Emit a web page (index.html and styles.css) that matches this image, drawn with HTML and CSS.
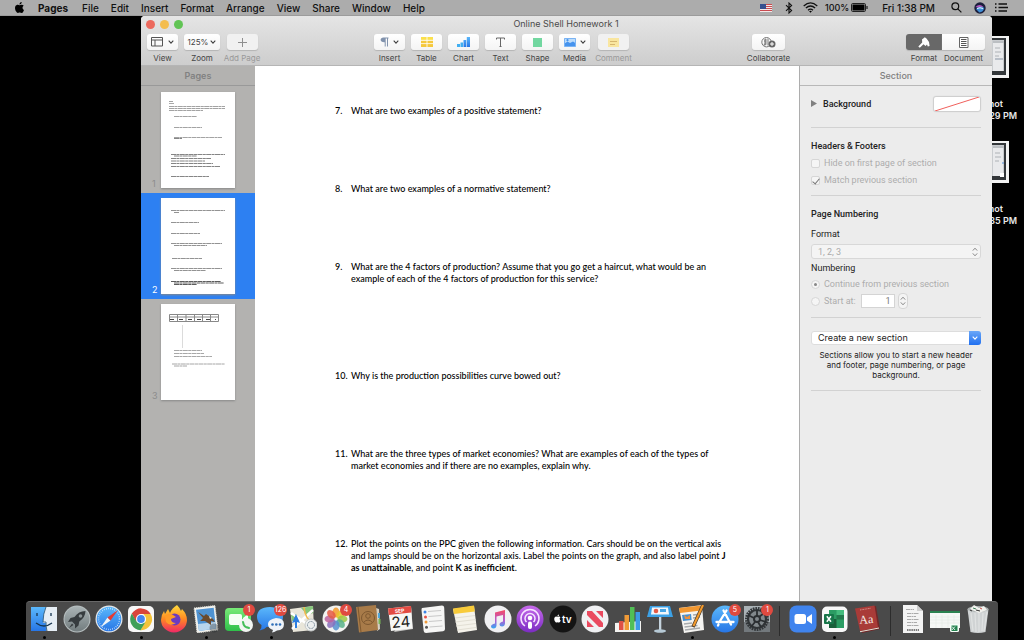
FILE: index.html
```html
<!DOCTYPE html>
<html lang="en">
<head>
<meta charset="utf-8">
<title>Online Shell Homework 1</title>
<link rel="stylesheet" href="styles.css">
</head>
<body>
<svg class="defs" aria-hidden="true">
  <defs>
    <symbol id="apple" viewBox="0 0 24 24"><path d="M12.152 6.896c-.948 0-2.415-1.078-3.96-1.04-2.04.027-3.91 1.183-4.961 3.014-2.117 3.675-.546 9.103 1.519 12.09 1.013 1.454 2.208 3.09 3.792 3.039 1.52-.065 2.09-.987 3.935-.987 1.831 0 2.35.987 3.96.948 1.637-.026 2.676-1.48 3.676-2.948 1.156-1.688 1.636-3.325 1.662-3.415-.039-.013-3.182-1.221-3.22-4.857-.026-3.04 2.48-4.494 2.597-4.559-1.429-2.09-3.623-2.324-4.39-2.376-2-.156-3.675 1.09-4.61 1.09zM15.53 3.83c.843-1.012 1.4-2.427 1.245-3.83-1.207.052-2.662.805-3.532 1.818-.78.896-1.454 2.338-1.273 3.714 1.338.104 2.715-.688 3.559-1.701"/></symbol>
    <symbol id="chev" viewBox="0 0 6 4"><path d="M.7.7 3 3.1 5.3.7" fill="none" stroke="currentColor" stroke-width="1.1"/></symbol>
    <symbol id="updown" viewBox="0 0 6 10"><path d="M.8 3.6 3 1.2 5.2 3.6M.8 6.4 3 8.8 5.2 6.4" fill="none" stroke="currentColor"/></symbol>
    <linearGradient id="gBlue" x2="0" y2="1"><stop stop-color="#5bb8fb"/><stop offset="1" stop-color="#2776e6"/></linearGradient>
    <linearGradient id="gGreen" x2="0" y2="1"><stop stop-color="#79ea78"/><stop offset="1" stop-color="#2fc04a"/></linearGradient>
    <linearGradient id="gPurple" x2="0" y2="1"><stop stop-color="#c86bec"/><stop offset="1" stop-color="#7b2cc2"/></linearGradient>
    <linearGradient id="gGrey" x2="0" y2="1"><stop stop-color="#aab4b6"/><stop offset="1" stop-color="#727c7e"/></linearGradient>
    <linearGradient id="gFire" x2="0" y2="1"><stop stop-color="#ffdc3d"/><stop offset=".5" stop-color="#ff8a22"/><stop offset="1" stop-color="#ee2866"/></linearGradient>
    <linearGradient id="gNote" x2="0" y2="1"><stop stop-color="#f64b63"/><stop offset=".55" stop-color="#b65ad0"/><stop offset="1" stop-color="#32a8f3"/></linearGradient>
  </defs>
</svg>

<header class="menubar">
  <nav class="menus" aria-label="Menu bar">
    <button class="menu" aria-label="Apple"><svg class="apple"><use href="#apple"/></svg></button>
    <button class="menu menu-app">Pages</button>
    <button class="menu">File</button>
    <button class="menu">Edit</button>
    <button class="menu">Insert</button>
    <button class="menu">Format</button>
    <button class="menu">Arrange</button>
    <button class="menu">View</button>
    <button class="menu">Share</button>
    <button class="menu">Window</button>
    <button class="menu">Help</button>
  </nav>
  <div class="status">
    <svg width="12" height="8" viewBox="0 0 12 8"><path fill="#f3e8e8" d="M0 0h12v8H0z"/><path stroke="#c94a50" d="M0 .5h12M0 2.5h12M0 4.5h12M0 6.5h12"/><path fill="#35508f" d="M0 0h6v5H0z"/></svg>
    <svg class="s-bt" width="8" height="12" viewBox="0 0 8 12"><path d="M1 3.2 6.6 8.6 4 11V1l2.6 2.4L1 8.8" fill="none" stroke="#111" stroke-width="1.1"/></svg>
    <svg class="s-wifi" width="15" height="11" viewBox="0 0 15 11"><g fill="none" stroke="#111" stroke-width="1.3"><path d="M.7 3.9Q7.5-2.2 14.3 3.9"/><path d="M2.9 6.1Q7.5 2 12.1 6.1"/><path d="M5 8.2q2.5-2.1 5 0"/></g><path d="m7.5 10.8-1.4-1.6q1.4-1 2.8 0z"/></svg>
    <span class="s-pct">100%</span>
    <svg class="s-bat" width="17" height="9" viewBox="0 0 17 9"><rect x=".5" y=".5" width="14" height="8" rx="1.2" fill="none" stroke="#222"/><path d="M1.5 1.5h12v6h-12zM15.5 3h1v3h-1z"/></svg>
    <span class="s-clock">Fri 1:38 PM</span>
    <svg class="s-find" width="11" height="11" viewBox="0 0 11 11" fill="none" stroke="#111" stroke-width="1.2"><circle cx="4.3" cy="4.3" r="3.4"/><path d="m6.8 6.8 3.6 3.6"/></svg>
    <svg class="s-siri" width="12" height="12" viewBox="0 0 12 12"><circle cx="6" cy="6" r="5.7" fill="#1c1f3c"/><path d="M1.5 5q4-4 8 0-4 1-8 0" fill="#b25bc2"/><path d="M2 7q4-4 8.300-1-1 4-5 4.500" fill="#3f8ed6"/><path d="M3 6.500q3-1.500 6 0" stroke="#e8f6ff" fill="none"/></svg>
    <svg class="s-list" width="13" height="9" viewBox="0 0 13 9"><path d="M3.500 1H12M3.500 4.500H13M3.500 8H12M0 1h1.500M0 4.500h1.500M0 8h1.500" stroke="#111" stroke-width="1.600"/></svg>
  </div>
</header>

<main class="desktop">
  <div class="file file-a">
    <svg width="40" height="42" viewBox="0 0 40 42"><path fill="#f2f2f2" d="M0 0h40v42H0z"/><path fill="#33373a" d="M2 2h35v37H2z"/><path fill="#c9cccf" d="M4 4h31v31H4z"/><path fill="#e9eaec" d="M24 7h10v28H24z"/><path stroke="#aeb2b6" d="M24 6h11M26 12h5M26 16h6M26 20h4"/><path stroke="#8793a3" d="M26 23h8"/></svg>
    <span>Screen Shot</span><span>2020-01…29 PM</span>
  </div>
  <div class="file file-b">
    <svg width="40" height="42" viewBox="0 0 40 42"><path fill="#f2f2f2" d="M0 0h40v42H0z"/><path fill="#33373a" d="M2 2h35v37H2z"/><path fill="#c9cccf" d="M4 4h31v31H4z"/><path fill="#e9eaec" d="M24 7h10v28H24z"/><path stroke="#aeb2b6" d="M24 6h11M26 12h5M26 16h6M26 20h4"/><path stroke="#5790d8" d="M33 22h2"/><path fill="#fff" d="M31 32h4v4h-4z"/></svg>
    <span>Screen Shot</span><span>2020-01…35 PM</span>
  </div>

  <section class="window">
    <div class="chrome">
      <div class="titlebar">
        <div class="lights">
          <button class="light red" aria-label="Close"></button>
          <button class="light amber" aria-label="Minimise"></button>
          <button class="light green" aria-label="Zoom window"></button>
        </div>
        <h1 class="title">Online Shell Homework 1</h1>
      </div>
      <div class="toolbar">
        <div class="group">
          <button class="tool"><span class="key"><svg width="13" height="10" viewBox="0 0 13 10"><path fill="none" stroke="#555" d="M.5.500h11v8.500H.5zM.500 3h11M4 3v6"/></svg><svg class="chev"><use href="#chev"/></svg></span>View</button>
          <button class="tool tool-zoom"><span class="key">125%<svg class="chev"><use href="#chev"/></svg></span>Zoom</button>
          <button class="tool tool-add" disabled><span class="key"><svg width="9" height="9" viewBox="0 0 9 9"><path stroke="#8f8f8f" d="M4.500 0v9M0 4.500h9"/></svg></span>Add Page</button>
        </div>
        <div class="group">
          <button class="tool"><span class="key"><svg width="9" height="10" viewBox="0 0 9 10"><path fill="#8293ad" d="M3.500.500H8.500v1H8v8H7v-8H5.700v8h-1V5.200C-.5 5.500-.5.500 3.500.500z"/></svg><svg class="chev"><use href="#chev"/></svg></span>Insert</button>
          <button class="tool"><span class="key"><svg width="12" height="10" viewBox="0 0 12 10"><path fill="#fbe04c" d="M0 0h12v3.500H0z"/><path fill="#f5c83c" d="M0 3.500h12V10H0z"/><path stroke="#fff" stroke-width=".8" d="M6 0v10M0 3.300h12M0 6.600h12"/></svg></span>Table</button>
          <button class="tool"><span class="key"><svg width="13" height="10" viewBox="0 0 13 10"><path fill="#41aff2" d="M0 7h3v3H0zM3.500 5.500h2.500V10H3.500z"/><path fill="url(#gBlue)" d="M6.500 3h2.700v7H6.500zM9.800 0H13v10H9.800z"/></svg></span>Chart</button>
          <button class="tool"><span class="key"><svg width="9" height="10" viewBox="0 0 9 10"><path fill="none" stroke="#666" d="M.5 2.500V1h8v1.500M4.500 1v8.500M3.500 9.500h2"/></svg></span>Text</button>
          <button class="tool"><span class="key"><svg width="9" height="9"><path fill="#72d7a0" d="M0 0h9v9H0z"/></svg></span>Shape</button>
          <button class="tool"><span class="key"><svg width="12" height="9" viewBox="0 0 12 9"><path fill="#bcdcfb" d="M0 0h12v9H0z"/><path fill="#4593ee" d="M0 8V6l3.500-2.500L6 5l3-1.500 3 2V8z"/><circle cx="3.500" cy="2.200" r="1.100" fill="#4593ee"/><path fill="none" stroke="#7ab3f3" d="M.5.500h11v8H.5z"/></svg><svg class="chev"><use href="#chev"/></svg></span>Media</button>
          <button class="tool tool-wide" disabled><span class="key"><svg width="11" height="9" viewBox="0 0 11 9"><path fill="#f9e6a0" d="M0 0h11v9H0z"/><path stroke="#d6b670" d="M2 3.500h7M2 6.500h5"/></svg></span>Comment</button>
        </div>
        <div class="group">
          <button class="tool tool-collab"><span class="key"><svg width="15" height="11" viewBox="0 0 15 11"><circle cx="5.500" cy="5.200" r="4.700" fill="none" stroke="#777"/><path fill="#888" d="M3.500 2q2-1 2 .5v5q-2 2-3 .5l1-2q-1-2 0-4z"/><path stroke="#777" fill="none" d="M7 1.500v7"/><circle cx="11" cy="7" r="3.500" fill="#666"/><path stroke="#fff" d="M11 5v4M9 7h4"/></svg></span>Collaborate</button>
        </div>
        <div class="group group-seg">
          <button class="tool tool-format" aria-pressed="true"><span class="key key-on"><svg width="12" height="11" viewBox="0 0 12 11"><path fill="#fff" d="M4 2.500 6.800.300l1.700 1.200L11 5l.6 4-1.800.5-.8-2L7.500 9 5.500 7.200 1.800 10.800.3 9.500 4.200 5.500z"/></svg></span>Format</button>
          <button class="tool tool-doc"><span class="key key-end"><svg width="10" height="11" viewBox="0 0 10 11"><path fill="#fff" stroke="#666" d="M.5.500h8.500v10H.5z"/><path stroke="#555" d="M2 2.500h5.500M2 4.500h5.500M2 6.500h5.500M2 8.500h5.500"/></svg></span>Document</button>
        </div>
      </div>
    </div>

    <div class="panes">
      <aside class="pages">
        <h2 class="pane-title">Pages</h2>
        <button class="page"><span class="num">1</span>
          <svg class="thumb" viewBox="0 0 74 96"><g stroke="#666" stroke-width=".8" stroke-dasharray="5 .4 3 .4"><path d="M8 9.500h4M8 14.500h56M8 16.500h56M8 18.500h34M13 24.500h23M13 35.500h28M13 45.500h48" opacity=".75"/><path d="M13 46.500h8M10 62.500h54M13 64h23M10 66.500h40M10 69h34M10 71.500h42M10 74.500h49M10 84.500h38"/></g><path stroke="#aaa" d="M8 11.500h5"/></svg></button>
        <button class="page page-on" aria-current="page"><span class="num">2</span>
          <svg class="thumb" viewBox="0 0 74 96"><g stroke="#777" stroke-width=".8" stroke-dasharray="5 .4 3 .4"><path d="M10 12.500h54M13 14.500h5M10 24.500h28M10 35.500h29M10 45.500h51M13 47.500h33M11 60.500h30M10 70.500h51M13 72.500h32"/><path d="M10 83.500h50M13 85h50M13 86.500h23" stroke="#333"/></g></svg></button>
        <button class="page"><span class="num">3</span>
          <svg class="thumb" viewBox="0 0 74 96"><path fill="none" stroke="#888" d="M8.500 10.500h49v7h-49zM8.500 13h49M16.500 10.500v7M25 10.500v7M33.500 10.500v7M41.500 10.500v7M49.500 10.500v7"/><path stroke="#444" stroke-dasharray="4 5" d="M9 15.500h46"/><path fill="none" stroke="#ccc" stroke-width=".7" d="M21.500 21v23"/><g stroke="#777" stroke-width=".8" stroke-dasharray="5 .4 3 .4"><path d="M13 46.500h28M13 49.500h30M13 52.500h38M11 60h53M13 62h13" opacity=".8"/></g></svg></button>
      </aside>

      <article class="sheet">
        <ol class="questions">
          <li><span class="n">7.</span><p>What are two examples of a positive statement?</p></li>
          <li><span class="n">8.</span><p>What are two examples of a normative statement?</p></li>
          <li class="roomy"><span class="n">9.</span><p>What are the 4 factors of production? Assume that you go get a haircut, what would be an<br>example of each of the 4 factors of production for this service?</p></li>
          <li><span class="n">10.</span><p>Why is the production possibilities curve bowed out?</p></li>
          <li><span class="n">11.</span><p>What are the three types of market economies? What are examples of each of the types of<br>market economies and if there are no examples, explain why.</p></li>
          <li><span class="n">12.</span><p>Plot the points on the PPC given the following information. Cars should be on the vertical axis<br>and lamps should be on the horizontal axis. Label the points on the graph, and also label point <b>J<br>as unattainable</b>, and point <b>K as inefficient</b>.</p></li>
        </ol>
      </article>

      <aside class="inspector">
        <h2 class="pane-title">Section</h2>
        <form class="settings">
          <section class="block block-bg">
            <button type="button" class="disclose"><svg width="6" height="7" viewBox="0 0 6 7"><path fill="#808080" d="M0 0l6 3.500L0 7z"/></svg>Background</button>
            <button type="button" class="swatch" aria-label="Background colour"><svg width="46" height="14" viewBox="0 0 46 14"><path d="M1 14 45 0" stroke="#f0605c"/></svg></button>
          </section>
          <section class="block block-head">
            <h3>Headers &amp; Footers</h3>
            <label class="opt"><input type="checkbox" class="tick" disabled>Hide on first page of section</label>
            <label class="opt"><input type="checkbox" class="tick" checked disabled>Match previous section</label>
          </section>
          <section class="block block-num">
            <h3>Page Numbering</h3>
            <label class="field-name" for="fmt">Format</label>
            <div class="pick"><select id="fmt" disabled><option>1, 2, 3</option></select><svg class="pick-mark"><use href="#updown"/></svg></div>
            <p class="field-name name-numbering">Numbering</p>
            <label class="opt"><input type="radio" name="numbering" class="dot" checked disabled>Continue from previous section</label>
            <div class="start"><label class="opt"><input type="radio" name="numbering" class="dot" disabled>Start at:</label><input class="start-num" type="text" value="1" aria-label="Start number" disabled><button type="button" class="stepper" aria-label="Change start number" disabled><svg width="6" height="10"><use href="#updown"/></svg></button></div>
          </section>
          <section class="block block-new">
            <div class="pick pick-new"><select aria-label="Create a new section"><option>Create a new section</option></select><span class="pick-cap"><svg class="chev"><use href="#chev"/></svg></span></div>
            <p class="hint">Sections allow you to start a new header<br>and footer, page numbering, or page<br>background.</p>
          </section>
        </form>
      </aside>
    </div>
  </section>
</main>

<nav class="dock" aria-label="Dock">
  <button class="app running" aria-label="Finder"><svg viewBox="0 0 28 28"><path fill="url(#gBlue)" d="M1 2h15v24H1z"/><path fill="#e6eef5" d="M15 2h12v24H16.500q-.7-4-.7-8H13q0-9 3-16z"/><path d="M7 8v3M21 8v3M6 18q8 6 16 0" stroke="#16344f" stroke-width="1.300" fill="none"/><path d="M16 2q-3 7-3 15h3q0 5 1 9" fill="none" stroke="#24506f" stroke-width=".8"/></svg></button>
  <button class="app" aria-label="Launchpad"><svg viewBox="0 0 28 28"><circle cx="14" cy="14" r="13.500" fill="#b6bebf"/><circle cx="14" cy="14" r="12.500" fill="url(#gGrey)"/><path fill="#363c3f" d="M22.500 6q-7 0-11 6l-4 1-2.500 4 4-.5 3 3 0 4 3.500-3 .8-4q6-4 6.200-10.500zM9 18.500l1.500 1.500L6 23z"/><circle cx="17.500" cy="11" r="1.800" fill="#8b9496"/></svg></button>
  <button class="app" aria-label="Safari"><svg viewBox="0 0 28 28"><circle cx="14" cy="14" r="13.500" fill="#e5e7e9"/><circle cx="14" cy="14" r="12.300" fill="url(#gBlue)"/><circle cx="14" cy="14" r="10.500" fill="none" stroke="#e8f4ff" stroke-width="1.500" stroke-dasharray=".6 1.500"/><path fill="#f0f4f7" d="m5.500 22.500 7-10 3 3z"/><path fill="#e73a32" d="m23 5-10.500 7.500 3 3z"/></svg></button>
  <button class="app running" aria-label="Chrome"><svg viewBox="0 0 28 28"><rect x="1" y="1" width="26" height="26" rx="5" fill="#f7f7f7"/><path fill="#d9453a" d="M4.800 8.500A11 11 0 0 1 23.700 9H14l-5 8z"/><path fill="#f3c33b" d="M23.700 9A11 11 0 0 1 13.500 25.200L18.500 16l-2-7z"/><path fill="#3f9f58" d="M4.800 8.500A11 11 0 0 0 13.500 25.200l4.800-8-5 1-4-2z"/><circle cx="14" cy="14" r="5" fill="#fff"/><circle cx="14" cy="14" r="3.900" fill="#4687ee"/></svg></button>
  <button class="app" aria-label="Firefox"><svg viewBox="0 0 28 28"><path fill="url(#gFire)" d="M17 0q3 3 4 6l1-2q5 5 5 11a13 12.500 0 0 1-26 0q0-5 3-9l1 3 3-5 2 4q2-5 7-8z"/><circle cx="14.500" cy="14.500" r="6" fill="#6b3bc0"/><path fill="#ff9b28" d="M5 11q4-4 8-1l3 2-5 2q0 4 5 4-6 4-10-1z"/></svg></button>
  <button class="app running" aria-label="Mail"><svg viewBox="0 0 28 28"><path fill="#f3f3ee" stroke="#d6d6d0" stroke-dasharray="1 1" d="m2 3 21-2.500L26 25 5 28z"/><path fill="#4f93d2" d="m4 4.700 17.700-2L24 23.500 7 26z"/><path fill="#b8d5ec" d="m6 19 17-2 1 6.500L7 26z"/><path fill="#6a4a2d" d="m6 7 6 4 2-2 7 5 2 3-4-1 0 4-6-4-5 0 3-3z"/><path fill="#f1ede4" d="m17 11 3 2-2 1z"/><circle cx="22" cy="23" r="4.500" fill="#23282c" fill-opacity=".35"/></svg></button>
  <button class="app" aria-label="FaceTime"><svg viewBox="0 0 28 28"><rect x="0" y="3" width="26" height="23" rx="4" fill="url(#gGreen)"/><rect x="4" y="9" width="13" height="11" rx="2" fill="#f5fff5"/><path fill="#f5fff5" d="m18 13 5-4v11l-5-4z"/><circle cx="21" cy="20" r="7" fill="#f2f5f2"/><path fill="none" stroke="#43bd58" stroke-width="2" stroke-linecap="round" d="M18 17q.5 5.500 6 6M18 17l.5 1.500M24 23l-1.500-.5"/></svg><span class="badge">1</span></button>
  <button class="app running" aria-label="Messages"><svg viewBox="0 0 28 28"><path fill="url(#gBlue)" d="M13 2c7 0 13 4 13 10s-6 10-13 10q-2 0-3-.3Q7 25 2.500 25.500 5 23 4.500 20 0 17 0 12 0 2 13 2z"/><path fill="#eef3f8" d="M19 13q8 0 8 6t-7 6.500q-3 2-5 2l1-2.500q-5-1.500-5-6t8-6z"/><g fill="#2f6fb8"><circle cx="15.500" cy="19.500" r="1.300"/><circle cx="19.300" cy="19.500" r="1.300"/><circle cx="23" cy="19.500" r="1.300"/></g></svg><span class="badge">126</span></button>
  <button class="app" aria-label="Maps"><svg viewBox="0 0 28 28"><path fill="#e9e6da" d="m1 4 23-3 1 24-21 2z"/><path fill="#87c77c" d="m12 3 12-2 .3 7-6 2zM2 10l5-1 1 6-5 1z"/><path stroke="#fff" stroke-width="2.500" d="m3 24 21-19M2 8l22 15" fill="none"/><path stroke="#f0b84d" stroke-width="1.500" d="M15 2q1 12 9 16" fill="none"/><path fill="#2d7ee0" d="m7 9 4 9-3-1v6H6v-6l-3 1z"/><circle cx="22" cy="20" r="6" fill="#ecefef" stroke="#c5c8c8"/><circle cx="22" cy="20" r="3.500" fill="none" stroke="#6f8291" stroke-dasharray="1 .6"/></svg></button>
  <button class="app" aria-label="Photos"><svg viewBox="0 0 28 28"><circle cx="14" cy="14" r="13.500" fill="#f3f3f1"/><g fill-opacity=".85"><ellipse cx="14" cy="7.500" rx="3.500" ry="5" fill="#f49b2c"/><ellipse cx="14" cy="7.500" rx="3.500" ry="5" fill="#e6c52a" transform="rotate(45 14 14)"/><ellipse cx="14" cy="7.500" rx="3.500" ry="5" fill="#9cc544" transform="rotate(90 14 14)"/><ellipse cx="14" cy="7.500" rx="3.500" ry="5" fill="#58b28b" transform="rotate(135 14 14)"/><ellipse cx="14" cy="7.500" rx="3.500" ry="5" fill="#5590d0" transform="rotate(180 14 14)"/><ellipse cx="14" cy="7.500" rx="3.500" ry="5" fill="#8770bd" transform="rotate(225 14 14)"/><ellipse cx="14" cy="7.500" rx="3.500" ry="5" fill="#bd619e" transform="rotate(270 14 14)"/><ellipse cx="14" cy="7.500" rx="3.500" ry="5" fill="#e55a45" transform="rotate(315 14 14)"/></g></svg><span class="badge">4</span></button>
  <button class="app" aria-label="Contacts"><svg viewBox="0 0 28 28"><path fill="#d6d1c5" d="m22 3 3 1 1 20-3 2z"/><path fill="#4ea5d8" d="M24 8h2v5h-2z"/><path fill="#79b656" d="M24.500 14h2v5h-2z"/><path fill="#a87b49" d="M2 2 22 0l2 25L5 27.500z"/><path stroke="#7f592f" d="m4 2 3 25" fill="none"/><g fill="none" stroke="#7d5830"><circle cx="14" cy="13" r="6.500"/><circle cx="14" cy="11" r="2.300"/><path d="M9.500 17.500q4.500-5 9 0"/></g></svg></button>
  <button class="app" aria-label="Calendar"><svg viewBox="0 0 28 28"><path fill="#c8c8c6" d="m24 2 2 22-19 3z"/><path fill="#f7f7f5" d="M1 3.500 24 1l1.500 22.500L4 26z"/><path fill="#e34b43" d="m1 3.500 23-2.500.4 6.500L1.800 10z"/><text x="8" y="8" class="cal-month" transform="rotate(-5 8 8)">SEP</text><text x="5" y="23" class="cal-day" transform="rotate(-5 5 23)">24</text></svg></button>
  <button class="app" aria-label="Reminders"><svg viewBox="0 0 28 28"><path fill="#f6f6f5" d="m3 3 20-2.500q2 0 2.200 2L26 24q0 2-2 2.200L7 28q-2 0-2.300-2L2.500 5q0-1.500.5-2z"/><path stroke="#c8c8c8" d="m9 6.500 13-1M9.500 11.500l13-1M10 16.500l13-1M10.500 22l13-1"/><circle cx="6" cy="7" r="1.500" fill="#3c84e5"/><circle cx="6.500" cy="12" r="1.500" fill="#e65046"/><circle cx="7" cy="17" r="1.500" fill="#f09a38"/><circle cx="7.500" cy="22.300" r="1.500" fill="#555"/></svg></button>
  <button class="app" aria-label="Notes"><svg viewBox="0 0 28 28"><path fill="#f5f3eb" d="m2 4 21-3 3 24-19 3z"/><path fill="#f8cb3a" d="m2 3.500 21-3 .8 6L2.800 9z"/><path stroke="#e2dfd4" d="m4 13 20-2.500M4.500 17l20-2.500M5 21l20-2.500M6 25l19-2.500"/></svg></button>
  <button class="app" aria-label="Music"><svg viewBox="0 0 28 28"><circle cx="14" cy="14" r="13.500" fill="#f0f0f2"/><path fill="url(#gNote)" d="m11 7.500 10-2.500v13.500q-.3 3-3 3-2.500 0-2.500-2t3.500-3V10l-6.500 1.500v9q-.3 2.800-3 3-2.500 0-2.500-2t4-3z"/></svg></button>
  <button class="app" aria-label="Podcasts"><svg viewBox="0 0 28 28"><circle cx="14" cy="14" r="13.500" fill="url(#gPurple)"/><g fill="none" stroke="#f5e5ff" stroke-width="1.500"><path d="M9 21a9 9 0 1 1 10 0"/><path d="M10.500 17a5 5 0 1 1 7 0"/></g><circle cx="14" cy="13" r="2.300" fill="#fff"/><rect x="12" y="16.500" width="4" height="7.500" rx="2" fill="#fff"/></svg></button>
  <button class="app" aria-label="Apple TV"><svg viewBox="0 0 28 28"><circle cx="14" cy="14" r="13.500" fill="#141414"/><svg x="4.500" y="9" width="8" height="9" fill="#fff"><use href="#apple"/></svg><text x="13" y="17.500" class="tv">tv</text></svg></button>
  <button class="app" aria-label="News"><svg viewBox="0 0 28 28"><circle cx="14" cy="14" r="13.500" fill="#f0f1f3"/><path fill="#ea4a5f" d="M6 6h5l11 12v4h-4L6 10zM15 6h7v7zM6 15v7h7z"/></svg></button>
  <button class="app" aria-label="Numbers"><svg viewBox="0 0 28 28"><path fill="#f3f3f1" d="m1 18 26-2v11H1z"/><path fill="#df5046" d="M5 16h4.500v9H5z"/><path fill="#f09a37" d="M10.500 10H15v15h-4.500z"/><path fill="#51bf55" d="M16 2h4.500v23H16z"/><path fill="#3d9be5" d="M21.500 7H26v18h-4.500z"/></svg></button>
  <button class="app" aria-label="Keynote"><svg viewBox="0 0 28 28"><path fill="#3ca1e6" d="M4 1h20l3 11H1z"/><path fill="#f3f7fa" d="M6 2.500h16l1 7H5z"/><circle cx="10" cy="6" r="2.300" fill="#e55b46"/><path fill="#48a5e3" d="M14 4h6v3h-6z"/><path fill="#c5d3dd" d="M13 12h2.300v13H13z"/><ellipse cx="14" cy="26" rx="6" ry="1.700" fill="#b6c9d5"/></svg></button>
  <button class="app running" aria-label="Pages"><svg viewBox="0 0 28 28"><path fill="#f5f4f1" d="m1 3 23-3 2 25-20 3z"/><path fill="#f19731" d="m1 3 22-2.500.5 5L2 8z"/><path fill="#468fcf" d="m4 10 9-1 .7 6-8.700 1z"/><path fill="#ed903d" d="m6 10 3 2 3-2v4H7z"/><path stroke="#a8abad" d="m15 10 8-1M15 13l7-1M6 19l8-1M6.500 22l13-1.500M7 25l15-2" stroke-width="1.400"/><path stroke="#504031" stroke-width="3.500" d="M25 0 15 22"/><path stroke="#f49b2c" stroke-width="2" d="M25 0 15.500 21"/></svg></button>
  <button class="app" aria-label="App Store"><svg viewBox="0 0 28 28"><circle cx="14" cy="14" r="13.500" fill="url(#gBlue)"/><path fill="none" stroke="#fff" stroke-width="2.300" stroke-linecap="round" d="m12.500 5.500 7.500 14M15.500 5.500 9 16M5.500 17h11M19.500 17h3M7.500 19.500 7 20.500"/></svg><span class="badge">5</span></button>
  <button class="app" aria-label="System Preferences"><svg viewBox="0 0 28 28"><path fill="#aab2b6" d="M1 1h26v26H1z"/><path fill="#73797d" d="M1 17h26v10H1z"/><circle cx="14" cy="14" r="10.500" fill="none" stroke="#33373a" stroke-width="3" stroke-dasharray="1.700 .8"/><circle cx="14" cy="14" r="9" fill="#81888c" stroke="#303437" stroke-width="2.200"/><circle cx="14" cy="14" r="3" fill="none" stroke="#2b2f32" stroke-width="2"/><path stroke="#2b2f32" stroke-width="1.800" d="M14 11V5M17 15l6 2M12 17l-4 5M11 13l-6-3M16 12l5-4M15 17l3 5"/></svg><span class="badge">1</span></button>
  <span class="split"></span>
  <button class="app" aria-label="Zoom"><svg viewBox="0 0 28 28"><rect x=".5" y=".5" width="27" height="27" rx="7" fill="#4084ee"/><rect x="5.500" y="9" width="11.500" height="10" rx="2.500" fill="#fff"/><path fill="#fff" d="m18 12.500 5-3.500v10l-5-3.500z"/></svg></button>
  <button class="app running" aria-label="Excel"><svg viewBox="0 0 28 28"><rect x="1" y="1.500" width="25.500" height="25.500" rx="5" fill="#f8f8f8"/><path fill="#2b9c63" d="M8 5h15v18H8z"/><path fill="#45bb7d" d="M15.500 5H23v5h-7.500z"/><path fill="#195f3a" d="M8 14h7.500v9H8z"/><path fill="#237a4d" d="M15.500 10H23v4.500h-7.500z"/><rect x="3" y="9" width="10" height="10" rx="1" fill="#18764a"/><path stroke="#fff" stroke-width="1.500" d="m5.800 11.300 4.200 5.500M10 11.300l-4.200 5.500"/></svg></button>
  <button class="app" aria-label="Dictionary"><svg viewBox="0 0 28 28"><path fill="#712727" d="m3 4 20-3 4 23-18 4z"/><path fill="#a93b38" d="M2 3.500 21.500.500l3.500 22-18 3.500z"/><path stroke="#d7938c" d="m7 5 11-1.800" stroke-dasharray="1 .6"/><path stroke="#e9e2d7" d="m7 26.700 19-3.700"/><text x="6.500" y="19" class="dict" transform="rotate(-4 6 19)">Aa</text></svg></button>
  <span class="split"></span>
  <button class="app" aria-label="Document"><svg viewBox="0 0 28 28"><path fill="#f3f3f3" d="M4 0h14l6 6v23H4z"/><path fill="#cfcfcf" d="M18 0v6h6z"/><path stroke="#aaa" stroke-dasharray="4 .5 2 .5" d="M7 4.500h8M8 8.500h12M8 11.500h9M8 14.500h12M8 17.500h10M8 20.500h12"/><path stroke="#555" stroke-width="1.500" stroke-dasharray="1.500 .7" d="M8 25h12"/></svg></button>
  <button class="app app-wide" aria-label="Spreadsheet window"><svg viewBox="0 0 30 28"><path fill="#f5f7f5" d="M0 6h30v17H0z"/><path fill="#2b8250" d="M0 6h30v2H0z"/><path stroke="#e0e5e1" stroke-width=".5" d="M0 12h30M0 15h30M0 18h30M6 10v13M12 10v13M18 10v13M24 10v13"/><rect x="20" y="19" width="9" height="8" rx="1.500" fill="#f5fff8"/><path fill="#258350" d="M21.500 20.500h6v5.500h-6z"/><path stroke="#fff" stroke-width=".8" d="m22 21.500 3 3.500m0-3.500-3 3.500"/></svg></button>
  <button class="app" aria-label="Trash"><svg viewBox="0 0 28 28"><path fill="#d0d3d4" d="M3.500 4h21l-3 23q-7.500 2-15 0z"/><path stroke="#e0e2e2" stroke-width="1.200" fill="none" d="m7 8 2 18M11 8l1 19M15 8v19M19 8l-1 18M23 7l-3 19"/><ellipse cx="14" cy="4" rx="10.500" ry="3" fill="#a9aeae"/><path fill="#f1f1ed" d="m6 4 4-4 5 3 5-2 3 4-8 3z"/><path stroke="#3f7f59" d="m9 3 3 1"/><path stroke="#c65149" d="m16 3 2 1"/><path stroke="#333" d="m12 5 4 1M6 5l2 1"/></svg></button>
</nav>
</body>
</html>
```
FILE: styles.css
```css
* { box-sizing: border-box; }

body {
  margin: 0;
  height: 100vh;
  display: flex;
  flex-direction: column;
  overflow: hidden;
  background: #000;
  color: #222;
  font: 9px/12px Inter, "Liberation Sans", sans-serif;
}

h1, h2, h3, p, ol { margin: 0; padding: 0; font-size: inherit; }

button {
  margin: 0;
  padding: 0;
  border: 0;
  background: none;
  color: inherit;
  font: inherit;
}

svg { display: block; flex: none; }
.defs { position: absolute; width: 0; height: 0; }

/* Menu bar */
.menubar {
  flex: none;
  display: flex;
  justify-content: space-between;
  height: 16px;
  padding: 0 16px 0 14px;
  background: #acacac;
  border-bottom: 1px solid #9b9b9b;
  color: #111;
  font-size: 10px;
  font-weight: 500;
}
.menus, .status { display: flex; align-items: center; }
.menus { gap: 12px; }
.menu { white-space: nowrap; }
.menu-app { margin: 0 2px 0 1px; font-weight: 700; }
.apple { width: 11px; height: 11px; }
.s-bt { margin-left: 13px; }
.s-wifi { margin-left: 10px; }
.s-pct { margin-left: 7px; font-size: 9px; }
.s-bat { margin-left: 2px; }
.s-clock { margin-left: 14px; }
.s-find { margin-left: 16px; }
.s-siri { margin-left: 12px; }
.s-list { margin-left: 9px; }

/* Desktop */
.desktop {
  position: relative;
  flex: 1;
  min-height: 0;
  display: flex;
  padding: 0 32px 0 141px;
}
.file {
  position: absolute;
  right: 7px;
  display: flex;
  flex-direction: column;
  align-items: flex-end;
  color: #e8e8e8;
  font-weight: 600;
  white-space: nowrap;
}
.file svg { margin: 0 8px 20px 0; }
.file span:nth-of-type(1) { margin-right: 14px; }
.file-a { top: 20px; }
.file-b { top: 125px; }

/* Window */
.window {
  position: relative;
  flex: 1;
  min-width: 0;
  display: flex;
  flex-direction: column;
  overflow: hidden;
  border-radius: 4px 4px 0 0;
  background: #fff;
}
.chrome {
  flex: none;
  height: 50px;
  background: linear-gradient(#e5e5e5, #cdcdcd);
  border-bottom: 1px solid #b5b5b5;
}
.titlebar {
  display: grid;
  grid-template-columns: 1fr auto 1fr;
  align-items: center;
  height: 18px;
  padding: 0 6px 2px 5px;
}
.lights { display: flex; gap: 5px; }
.light { width: 9px; height: 9px; border-radius: 50%; }
.red { background: #ec6a5e; }
.amber { background: #f4bd4f; }
.green { background: #61c454; }
.title { color: #4a4a4a; font-weight: 400; }

.toolbar {
  display: flex;
  justify-content: space-between;
  padding: 0 7px 0 6px;
  color: #444;
  font-size: 8px;
}
.group { display: flex; gap: 6px; }
.group-seg { gap: 0; }
.tool {
  display: flex;
  flex-direction: column;
  align-items: center;
  gap: 2px;
  width: 31px;
  white-space: nowrap;
}
.tool-zoom { width: 36px; }
.tool-add { width: 32px; }
.tool-wide { width: 35px; }
.tool-collab { width: 43px; }
.tool-format { width: 36px; }
.tool-doc { width: 43px; }
.tool:disabled { color: #999; }
.key {
  display: flex;
  align-items: center;
  justify-content: center;
  gap: 4px;
  width: 31px;
  height: 16px;
  border-radius: 3px;
  background: linear-gradient(#fff, #f4f4f4);
  box-shadow: 0 1px 1px #b4b4b4;
  color: #444;
}
.tool:disabled .key { background: #f1f1f1; }
.tool-zoom .key { width: 36px; gap: 2px; }
.tool-collab .key { width: 33px; }
.key-on { width: 100%; border-radius: 3px 0 0 3px; background: #686868; }
.key-end { width: 100%; border-radius: 0 3px 3px 0; }
.chev { width: 6px; height: 4px; }

.panes { flex: 1; min-height: 0; display: flex; }
.pane-title {
  height: 20px;
  line-height: 19px;
  text-align: center;
  color: #808080;
  font-weight: 500;
  border-bottom: 1px solid #b8b8b8;
}

/* Page thumbnails */
.pages { flex: none; width: 114px; background: #b3b2b0; }
.pages .pane-title { margin-bottom: 1px; border-color: #999; color: #818181; font-weight: 600; }
.page {
  display: flex;
  align-items: flex-end;
  width: 100%;
  height: 106px;
  padding: 5px 0 5px 11px;
  color: #8c8c8c;
  text-align: left;
}
.num { width: 9px; line-height: 8px; }
.page-on { background: #2d80f2; color: #fff; }
.thumb { width: 74px; height: 96px; background: #fff; box-shadow: 0 1px 2px #888; }

/* Document */
.sheet {
  flex: 1;
  min-width: 0;
  overflow: hidden;
  padding: 39px 0 0 80px;
  background: #fff;
  color: #000;
  font-family: Lato, "Liberation Sans", sans-serif;
  font-weight: 500;
}
.questions { list-style: none; }
.questions li { display: flex; margin-bottom: 66px; white-space: nowrap; }
.questions .roomy { margin-bottom: 85px; }
.n { flex: none; width: 16px; }

/* Inspector */
.inspector {
  flex: none;
  width: 193px;
  background: #ececec;
  border-left: 1px solid #adadad;
}
.settings { padding: 0 11px; font-family: Roboto, "Liberation Sans", sans-serif; }
.block { display: flex; flex-direction: column; border-bottom: 1px solid #d2d2d2; }
.block h3 { font-weight: 500; }
.block-bg {
  flex-direction: row;
  align-items: center;
  justify-content: space-between;
  height: 42px;
  padding-bottom: 6px;
}
.disclose { display: flex; align-items: center; gap: 6px; font-weight: 500; }
.swatch { margin-right: 1px; border-radius: 2px; background: #fff; box-shadow: 0 0 1px 1px #cdcdcd; }
.block-head { gap: 5px; padding: 12px 0 9px; }
.opt { display: flex; align-items: center; gap: 4px; color: #adadad; white-space: nowrap; }
.tick, .dot {
  appearance: none;
  display: grid;
  place-items: center;
  width: 9px;
  height: 9px;
  margin: 0;
  border: 1px solid #d6d6d6;
  border-radius: 2px;
  background: #f5f5f5;
}
.dot { border-radius: 50%; }
.tick:checked::before {
  content: "";
  width: 3px;
  height: 6px;
  margin-bottom: 1px;
  border: solid #777;
  border-width: 0 1px 1px 0;
  transform: rotate(40deg);
}
.dot:checked::before { content: ""; width: 3px; height: 3px; border-radius: 50%; background: #888; }

.block-num { padding: 12px 0 8px; }
.block-num .field-name { margin: 8px 0 4px; }
.block-num .name-numbering { margin: 3px 0 4px; }
.pick { display: grid; align-items: center; }
.pick > * { grid-area: 1 / 1; }
.pick select {
  appearance: none;
  width: 100%;
  height: 15px;
  margin: 0;
  padding: 0 6px;
  border: 1px solid #d8d8d8;
  border-radius: 3px;
  background: #f4f4f4;
  color: #aaa;
  font: inherit;
  opacity: 1;
}
.pick-mark { justify-self: end; width: 6px; height: 10px; margin-right: 3px; color: #888; pointer-events: none; }
.start { display: flex; align-items: center; margin-top: 3px; }
.start-num {
  width: 34px;
  height: 14px;
  margin-left: 5px;
  padding: 0 3px;
  border: 1px solid #d4d4d4;
  background: #fff;
  color: #777;
  font: inherit;
  text-align: right;
}
.stepper { margin-left: 3px; padding: 2px 1px; border: 1px solid #d6d6d6; border-radius: 4px; background: #f4f4f4; color: #888; }
.block-new { gap: 5px; padding: 13px 0 10px; }
.block-new .pick select { height: 14px; border-color: #ddd; background: #fff; color: #222; font-family: Inter, sans-serif; }
.pick-cap {
  justify-self: end;
  display: grid;
  place-items: center;
  width: 12px;
  height: 14px;
  border-radius: 0 3px 3px 0;
  background: linear-gradient(#6aa7f8, #2170f0);
  color: #fff;
  pointer-events: none;
}
.hint { font-family: Inter, sans-serif; font-size: 8px; line-height: 10px; text-align: center; white-space: nowrap; }

/* Dock */
.dock {
  position: absolute;
  left: 26px;
  right: 26px;
  bottom: 0;
  display: flex;
  height: 39px;
  padding: 0 4px 0 2px;
  border-radius: 4px 4px 0 0;
  background: #4a4a4a;
  border-top: 1px solid #686868;
}
.app {
  position: relative;
  flex: 1;
  display: flex;
  flex-direction: column;
  align-items: center;
  gap: 3px;
  padding-top: 3px;
}
.app > svg { width: 28px; height: 28px; }
.app-wide > svg { width: 30px; }
.running::after { content: ""; width: 3px; height: 3px; border-radius: 50%; background: #000; }
.split { flex: none; width: 13px; margin: 4px 0; background: linear-gradient(#2c2c2c, #2c2c2c) center / 1px 100% no-repeat; }
.badge {
  position: absolute;
  top: 2px;
  right: 0;
  min-width: 12px;
  padding: 0 1px;
  border-radius: 6px;
  background: #df4a40;
  color: #fff;
  font-size: 7px;
  line-height: 12px;
  text-align: center;
}
.cal-month { font: 700 5px Inter, sans-serif; fill: #fff; }
.cal-day { font: 400 15px Inter, sans-serif; fill: #222; }
.tv { font: 600 10px Inter, sans-serif; fill: #fff; }
.dict { font: 12px "Liberation Serif", serif; fill: #f4e9e2; }
```
